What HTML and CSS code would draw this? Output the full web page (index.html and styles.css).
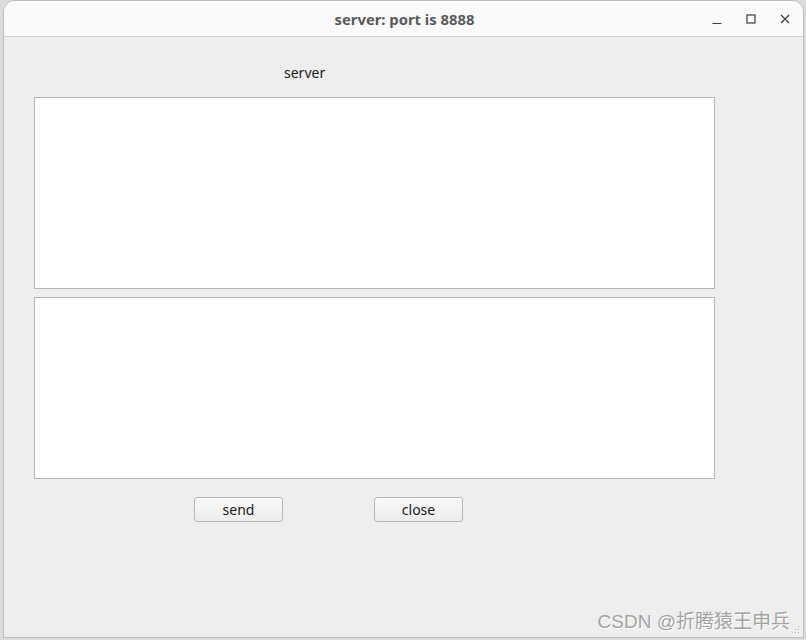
FILE: index.html
```html
<!doctype html>
<html lang="en">
  <head>
    <meta charset="UTF-8" />
    <title>server: port is 8888</title>
    <link rel="stylesheet" href="styles.css">
  </head>
  <body>
    <div class="window">
      <div class="titlebar">
        <span class="title">server: port is 8888</span>
        <div class="controls">
          <svg width="12" height="12" viewBox="0 0 12 12"><path d="M1.5 10.5h9" stroke="#3c3c3c" stroke-width="1.2"/></svg>
          <svg width="12" height="12" viewBox="0 0 12 12"><rect x="2" y="2" width="8" height="8" fill="none" stroke="#3c3c3c" stroke-width="1.2"/></svg>
          <svg width="12" height="12" viewBox="0 0 12 12"><path d="M2 2l8 8M10 2l-8 8" stroke="#3c3c3c" stroke-width="1.2"/></svg>
        </div>
      </div>

      <div class="content">
        <div class="label-row">server</div>
        <textarea class="box box-top"></textarea>
        <textarea class="box box-bottom"></textarea>
        <div class="buttons">
          <button class="btn">send</button>
          <button class="btn">close</button>
        </div>
      </div>

      <div class="watermark">CSDN @折腾猿王申兵</div>
      <svg class="grip" width="10" height="10" viewBox="0 0 10 10">
        <g fill="#b8b8b8">
          <rect x="7" y="1" width="1" height="1"/>
          <rect x="4" y="4" width="1" height="1"/>
          <rect x="7" y="4" width="1" height="1"/>
          <rect x="1" y="7" width="1" height="1"/>
          <rect x="4" y="7" width="1" height="1"/>
          <rect x="7" y="7" width="1" height="1"/>
        </g>
      </svg>
    </div>
  </body>
</html>
```

FILE: styles.css
```css
body {
  margin: 0;
  background: #dcdcdc;
  font-family: "Noto Sans", "DejaVu Sans", "Noto Sans CJK SC", sans-serif;
  height: 640px;
  overflow: hidden;
}

.window {
  position: relative;
  margin-left: 3px;
  width: 799px;
  height: 636px;
  background: #eeeeee;
  border: 1px solid #bcbcbc;
  border-radius: 12px 12px 0 0;
  overflow: hidden;
}

/* title bar */
.titlebar {
  position: relative;
  height: 35px;
  background: #fafafa;
  border-bottom: 1px solid #d2d2d2;
  display: flex;
  align-items: center;
  justify-content: center;
}

.title {
  font-size: 14.8px;
  font-weight: 700;
  color: #5a5a5a;
  margin-left: 2px;
}

.controls {
  position: absolute;
  right: 12px;
  top: 12px;
  display: flex;
  gap: 22px;
}

/* content */
.content {
  padding: 26px 0 0 30px;
}

.label-row {
  padding-left: 250px;
  font-size: 14px;
  line-height: 20px;
  color: #1a1a1a;
}

.box {
  display: block;
  box-sizing: border-box;
  width: 681px;
  margin: 0;
  padding: 0;
  border: 1px solid #b4b4b4;
  background: #fff;
  resize: none;
  outline: none;
}

.box-top {
  margin-top: 14px;
  height: 192px;
}

.box-bottom {
  margin-top: 8px;
  height: 182px;
}

.buttons {
  display: flex;
  gap: 91px;
  margin-top: 18px;
  padding-left: 160px;
}

.btn {
  box-sizing: border-box;
  width: 89px;
  height: 25px;
  padding: 0;
  border: 1px solid #b6b6b6;
  border-radius: 3px;
  background: linear-gradient(#f9f9f9, #ececec);
  font-family: "Noto Sans", "DejaVu Sans", sans-serif;
  font-size: 14px;
  color: #1a1a1a;
}

/* overlays */
.watermark {
  position: absolute;
  right: 13px;
  bottom: 4px;
  font-family: "Liberation Sans", "Noto Sans CJK SC", sans-serif;
  font-size: 19px;
  color: #a3a3a3;
  text-shadow: 1px 1px 0 #fff;
  white-space: nowrap;
}

.grip {
  position: absolute;
  right: 2px;
  bottom: 2px;
}
```
